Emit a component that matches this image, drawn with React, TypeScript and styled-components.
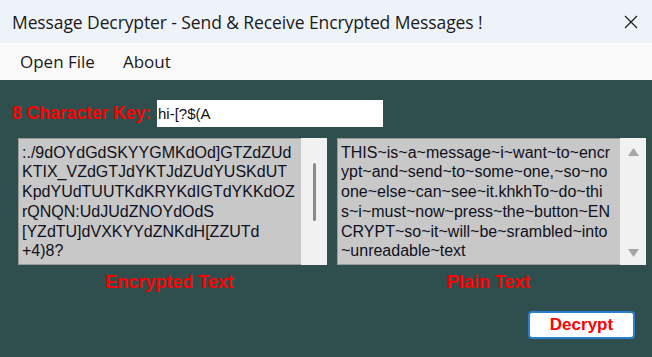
import React from 'react'
import styled, { createGlobalStyle } from 'styled-components'

const GlobalStyle = createGlobalStyle`
  html, body {
    margin: 0;
    padding: 0;
    background: #2f4f4f;
  }
  * {
    box-sizing: border-box;
  }
`

const encryptedLines = [
  ':./9dOYdGdSKYYGMKdOd]GTZdZUd',
  'KTIX_VZdGTJdYKTJdZUdYUSKdUT',
  'KpdYUdTUUTKdKRYKdIGTdYKKdOZ',
  'rQNQN:UdJUdZNOYdOdS',
  '[YZdTU]dVXKYYdZNKdH[ZZUTd',
  '+4)8?',
  'Ql\u2019ZdTJdVKXYUTdOZ.dLKTd',
]

const plainLines = [
  'THIS~is~a~message~i~want~to~encr',
  'ypt~and~send~to~some~one,~so~no',
  'one~else~can~see~it.khkhTo~do~thi',
  's~i~must~now~press~the~button~EN',
  'CRYPT~so~it~will~be~srambled~into',
  '~unreadable~text',
]

const CloseIcon = () => (
  <svg width="14" height="14" viewBox="0 0 14 14">
    <path d="M1 1 L13 13 M13 1 L1 13" stroke="#1b1b1b" strokeWidth="1.2" fill="none" />
  </svg>
)

const Arrow = ({ down }: { down?: boolean }) => (
  <svg width="11" height="8" viewBox="0 0 11 8">
    <path d={down ? 'M0 0 L11 0 L5.5 8 Z' : 'M0 8 L11 8 L5.5 0 Z'} fill="#a6a6a6" />
  </svg>
)

export default function App() {
  return (
    <>
      <GlobalStyle />
      <Window>
        <TitleBar>
          <Title>Message Decrypter - Send &amp; Receive Encrypted Messages !</Title>
          <CloseButton>
            <CloseIcon />
          </CloseButton>
        </TitleBar>
        <MenuBar>
          <MenuItem>Open File</MenuItem>
          <MenuItem>About</MenuItem>
        </MenuBar>
        <Main>
          <KeyRow>
            <RedLabel>8 Character Key:</RedLabel>
            <KeyInput>hi-[?$(A</KeyInput>
          </KeyRow>
          <Panels>
            <Panel>
              <TextBox>
                <TextArea>
                  {encryptedLines.map((line, i) => (
                    <Line key={i}>{line}</Line>
                  ))}
                </TextArea>
                <ScrollBar>
                  <Thumb />
                </ScrollBar>
              </TextBox>
              <Caption>Encrypted Text</Caption>
            </Panel>
            <Panel>
              <TextBox>
                <TextArea>
                  {plainLines.map((line, i) => (
                    <Line key={i}>{line}</Line>
                  ))}
                </TextArea>
                <ScrollBar arrows>
                  <Arrow />
                  <Arrow down />
                </ScrollBar>
              </TextBox>
              <Caption>Plain Text</Caption>
            </Panel>
          </Panels>
          <ButtonRow>
            <DecryptButton>Decrypt</DecryptButton>
          </ButtonRow>
        </Main>
      </Window>
    </>
  )
}

const Window = styled.div`
  width: 652px;
  height: 357px;
  display: flex;
  flex-direction: column;
  overflow: hidden;
  font-family: 'Liberation Sans', Arial, sans-serif;
`

const TitleBar = styled.div`
  height: 43px;
  flex: none;
  background: #eef3f9;
  display: flex;
  align-items: center;
  justify-content: space-between;
  padding: 0 14px 0 12px;
`

const Title = styled.div`
  font-family: 'Open Sans', 'Noto Sans', sans-serif;
  font-size: 17.5px;
  color: #1a1a1a;
  letter-spacing: -0.1px;
`

const CloseButton = styled.div`
  display: flex;
  align-items: center;
`

const MenuBar = styled.div`
  height: 37px;
  flex: none;
  background: #f9f9f9;
  display: flex;
  align-items: center;
  gap: 28px;
  padding-left: 20px;
`

const MenuItem = styled.div`
  font-family: 'Open Sans', 'Noto Sans', sans-serif;
  font-size: 17px;
  color: #1a1a1a;
`

const Main = styled.div`
  flex: 1;
  background: #2f4f4f;
  display: flex;
  flex-direction: column;
  padding-top: 20px;
`

const KeyRow = styled.div`
  display: flex;
  align-items: center;
  padding-left: 12px;
  height: 27px;
`

const RedLabel = styled.div`
  font-weight: bold;
  font-size: 17.5px;
  color: #ff0000;
  width: 145px;
  white-space: nowrap;
`

const KeyInput = styled.div`
  width: 226px;
  height: 27px;
  background: #ffffff;
  font-size: 15px;
  color: #111;
  display: flex;
  align-items: center;
  padding-left: 1px;
`

const Panels = styled.div`
  display: flex;
  gap: 10px;
  padding-left: 18px;
  margin-top: 11px;
`

const Panel = styled.div`
  width: 309px;
  display: flex;
  flex-direction: column;
  align-items: center;
`

const TextBox = styled.div`
  width: 100%;
  height: 127px;
  display: flex;
`

const TextArea = styled.div`
  flex: 1;
  background: #c8c8c8;
  border: 1px solid #9a9a9a;
  border-right: none;
  padding: 3.5px 0 0 3px;
  overflow: hidden;
  font-size: 16px;
  line-height: 19.8px;
  color: #101020;
`

const Line = styled.div`
  white-space: nowrap;
`

const ScrollBar = styled.div<{ arrows?: boolean }>`
  width: 26px;
  flex: none;
  background: #f1f1f1;
  display: flex;
  flex-direction: column;
  align-items: center;
  justify-content: ${({ arrows }) => (arrows ? 'space-between' : 'flex-start')};
  padding: ${({ arrows }) => (arrows ? '10px 0 8px' : '25px 0 0')};
`

const Thumb = styled.div`
  width: 3px;
  height: 58px;
  border-radius: 2px;
  background: #8a8a8a;
`

const Caption = styled.div`
  font-weight: bold;
  font-size: 18px;
  color: #ff0000;
  margin-top: 7px;
  margin-left: -6px;
`

const ButtonRow = styled.div`
  display: flex;
  justify-content: flex-end;
  padding-right: 17px;
  margin-top: 18px;
`

const DecryptButton = styled.button`
  width: 107px;
  height: 28px;
  background: #ffffff;
  border: 2px solid #2a7fd0;
  border-radius: 4px;
  font-family: 'Liberation Sans', Arial, sans-serif;
  font-weight: bold;
  font-size: 17px;
  color: #ff0000;
  padding: 0;
`
